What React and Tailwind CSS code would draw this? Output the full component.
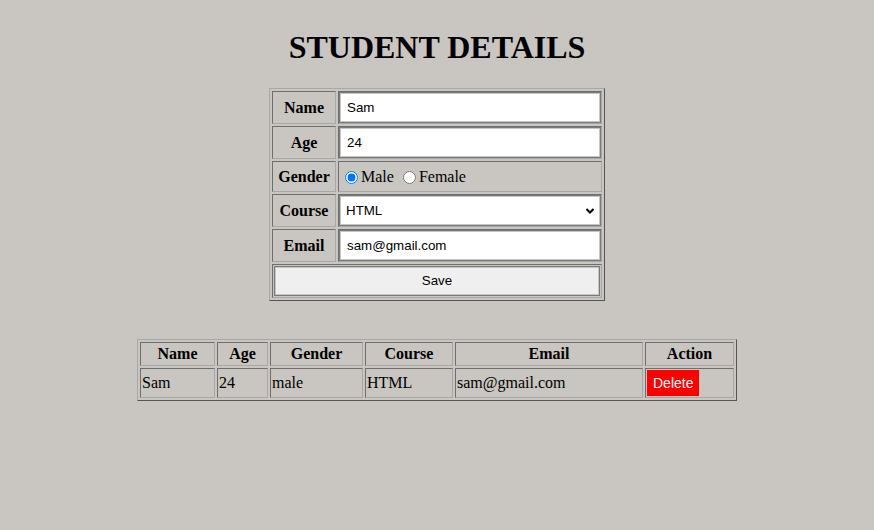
import React from "react";

const serif = "font-['Liberation_Serif','Times_New_Roman',serif]";
const sans = "font-['Liberation_Sans',Arial,sans-serif]";

function Th({ children, className = "" }) {
  return (
    <th
      className={`border border-t-[#6e6e6e] border-l-[#6e6e6e] border-b-[#a8a8a8] border-r-[#a8a8a8] px-[1px] py-[1px] font-bold text-center text-[16px] ${className}`}
    >
      {children}
    </th>
  );
}

function Td({ children, className = "", ...rest }) {
  return (
    <td
      {...rest}
      className={`border border-t-[#6e6e6e] border-l-[#6e6e6e] border-b-[#a8a8a8] border-r-[#a8a8a8] p-0 ${className}`}
    >
      {children}
    </td>
  );
}

const inputCls = `block w-[262px] h-[31px] bg-white border border-[#7a7a7a] shadow-[inset_0_0_0_1px_#c6c6c6] px-[7px] text-[13.33px] text-black ${sans}`;

export default function App() {
  const tableCls =
    "mx-auto border-separate border-spacing-[2px] border border-t-[#a8a8a8] border-l-[#a8a8a8] border-b-[#555] border-r-[#555]";
  return (
    <div className={`min-h-[530px] w-full bg-[#c9c5c0] pt-[8px] text-black leading-[normal] ${serif}`}>
      <h1 className="mt-[21px] mb-[22px] text-center text-[32px] font-bold leading-[37px]">
        STUDENT DETAILS
      </h1>

      <table className={tableCls}>
        <tbody>
          <tr>
            <Th className="w-[64px]">Name</Th>
            <Td>
              <input className={inputCls} defaultValue="Sam" />
            </Td>
          </tr>
          <tr>
            <Th>Age</Th>
            <Td>
              <input className={inputCls} defaultValue="24" />
            </Td>
          </tr>
          <tr>
            <Th className="h-[31px]">Gender</Th>
            <Td className="px-[1px] pt-[3px] text-[16px]">
              <label className="inline-flex items-center">
                <input
                  type="radio"
                  name="g"
                  defaultChecked
                  className="ml-[5px] mr-[3px] mt-[1px] h-[13px] w-[13px]"
                />
                Male
              </label>{" "}
              <label className="inline-flex items-center">
                <input
                  type="radio"
                  name="g"
                  className="ml-[5px] mr-[3px] mt-[1px] h-[13px] w-[13px]"
                />
                Female
              </label>
            </Td>
          </tr>
          <tr>
            <Th>Course</Th>
            <Td>
              <div className="relative">
                <select
                  className={`${inputCls} appearance-none pl-[6px]`}
                  defaultValue="HTML"
                >
                  <option>HTML</option>
                  <option>CSS</option>
                  <option>JavaScript</option>
                </select>
                <svg
                  className="pointer-events-none absolute right-[6px] top-[11px]"
                  width="10"
                  height="10"
                  viewBox="0 0 10 10"
                >
                  <path
                    d="M1.5 3 L5 6.5 L8.5 3"
                    fill="none"
                    stroke="#000"
                    strokeWidth="2"
                  />
                </svg>
              </div>
            </Td>
          </tr>
          <tr>
            <Th>Email</Th>
            <Td>
              <input className={inputCls} defaultValue="sam@gmail.com" />
            </Td>
          </tr>
          <tr>
            <Td colSpan={2} className="p-[1px]">
              <button
                className={`block w-full h-[30px] bg-[#efefef] border border-[#7a7a7a] shadow-[inset_0_0_0_1px_#c6c6c6] pb-[2px] text-[13.33px] text-black ${sans}`}
              >
                Save
              </button>
            </Td>
          </tr>
        </tbody>
      </table>

      <table className={`${tableCls} mt-[38px] w-[600px] text-[16px]`}>
        <thead>
          <tr>
            <Th className="w-[75px] h-[24px]">Name</Th>
            <Th className="w-[51px]">Age</Th>
            <Th className="w-[93px]">Gender</Th>
            <Th className="w-[88px]">Course</Th>
            <Th className="w-[188px]">Email</Th>
            <Th className="w-[89px]">Action</Th>
          </tr>
        </thead>
        <tbody>
          <tr>
            <Td className="h-[30px] px-[1px] text-left">Sam</Td>
            <Td className="px-[1px] text-left">24</Td>
            <Td className="px-[1px] text-left">male</Td>
            <Td className="px-[1px] text-left">HTML</Td>
            <Td className="px-[1px] text-left">sam@gmail.com</Td>
            <Td className="p-[1px] text-left">
              <button
                className={`block bg-[#ff0000] text-white text-[14px] h-[26px] px-[6px] ${sans}`}
              >
                Delete
              </button>
            </Td>
          </tr>
        </tbody>
      </table>
    </div>
  );
}
